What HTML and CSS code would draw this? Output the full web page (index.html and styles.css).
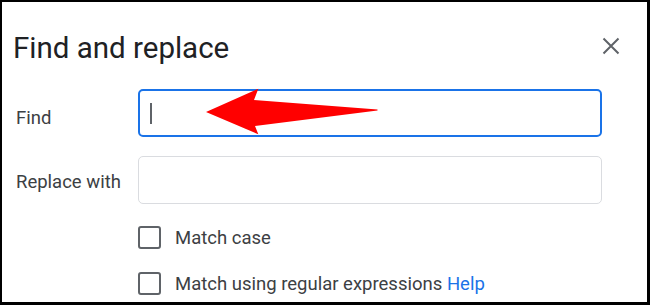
FILE: index.html
```html
<!DOCTYPE html>
<html lang="en">
<head>
  <meta charset="UTF-8" />
  <title>Find and replace</title>
  <link rel="stylesheet" href="styles.css">
</head>
<body>

  <div class="frame">
    <div class="header">
      <h1>Find and replace</h1>
      <svg class="close" width="24" height="24" viewBox="0 0 24 24">
        <path d="M4.5 4.5 L19.5 19.5 M19.5 4.5 L4.5 19.5" stroke="#5f6368" stroke-width="2" fill="none"/>
      </svg>
    </div>

    <div class="row row-find">
      <div class="label label-find">Find</div>
      <div class="field focused"><span class="caret"></span></div>
    </div>

    <div class="row row-replace">
      <div class="label">Replace with</div>
      <div class="field"></div>
    </div>

    <div class="options">
      <div class="option"><span class="box"></span>Match case</div>
      <div class="option"><span class="box"></span>Match using regular expressions&nbsp;<a href="#">Help</a></div>
    </div>

    <!-- red arrow pointing at the find box -->
    <svg class="arrow" width="185" height="52" viewBox="0 0 185 52">
      <polygon points="6,26 58.3,2.7 54,14 177.5,23.6 177.5,24.6 55,40 58.3,48.3" fill="#ff0000"/>
    </svg>
  </div>

</body>
</html>
```

FILE: styles.css
```css
body {
  margin: 0;
  font-family: Roboto, "Liberation Sans", Arial, sans-serif;
  background: #fff;
}

.frame {
  position: relative;
  width: 650px;
  height: 305px;
  box-sizing: border-box;
  border: 2px solid #000;
  border-right-width: 3px;
  border-bottom-width: 3px;
  padding: 0 0 0 14px;
  overflow: hidden;
}

.header {
  display: flex;
  justify-content: space-between;
  align-items: center;
  margin-top: 28px;
  padding-right: 24px;
}

.header h1 {
  margin: 0 0 0 -3px;
  font-size: 29.5px;
  line-height: 36px;
  font-weight: 400;
  color: #202124;
}

.close {
  margin-top: -4px;
}

.row {
  display: flex;
  align-items: flex-start;
  height: 48px;
}

.row-find {
  margin-top: 23px;
}

.row-replace {
  margin-top: 19px;
}

.label {
  width: 122px;
  font-size: 18.5px;
  line-height: 48px;
  padding-top: 2px;
  color: #3c4043;
}

.label-find {
  padding-top: 5px;
}

.field {
  width: 464px;
  height: 48px;
  box-sizing: border-box;
  border: 1px solid #dadce0;
  border-radius: 5px;
  display: flex;
  align-items: center;
  padding-left: 11px;
}

.field.focused {
  border: 2px solid #1a73e8;
  padding-left: 10px;
}

.caret {
  width: 2px;
  height: 21px;
  background: #5f6368;
}

.options {
  margin-top: 22px;
  padding-left: 122px;
  display: flex;
  flex-direction: column;
  gap: 23px;
}

.option {
  display: flex;
  align-items: center;
  height: 23px;
  font-size: 18.5px;
  color: #3c4043;
}

.box {
  width: 23px;
  height: 23px;
  box-sizing: border-box;
  border: 2.5px solid #5f6368;
  border-radius: 3px;
  margin-right: 14px;
}

.option a {
  color: #1a73e8;
  text-decoration: none;
}

.arrow {
  position: absolute;
  left: 198px;
  top: 84px;
}
```
